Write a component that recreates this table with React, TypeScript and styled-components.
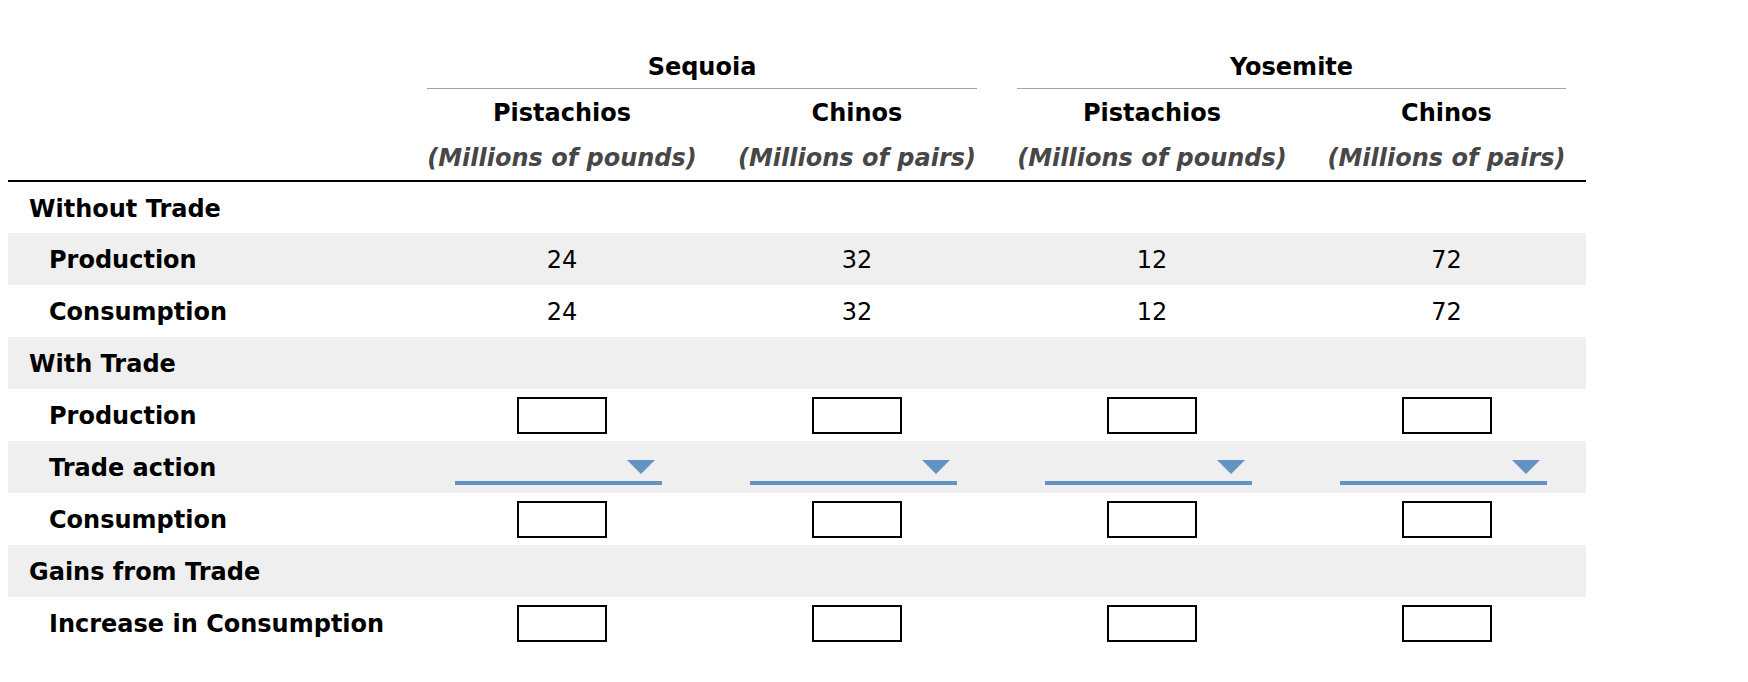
import styled, {createGlobalStyle} from 'styled-components';

const GlobalStyle = createGlobalStyle`
  body {
    margin: 8px;
    background: #ffffff;
    font-family: 'DejaVu Sans', Verdana, sans-serif;
    color: #000000;
  }
`;

const COLOR = {
  BLACK: '#000000',
  GRAY_TEXT: '#474747',
  GRAY_RULE: '#a4a4a4',
  BAND: '#efefef',
  BLUE: '#6392c3',
};

const Table = styled.table`
  margin-top: 39px;
  width: 1578px;
  table-layout: fixed;
  border-collapse: collapse;
  border-spacing: 0;
  font-size: 24px;
`;

const HeadCell = styled.th<{$h: number; $rule?: boolean}>`
  height: ${p => p.$h}px;
  padding: 0 20px;
  text-align: center;
  vertical-align: top;
  font-weight: 700;
  line-height: ${p => p.$h}px;
  white-space: nowrap;
  border-bottom: ${p => (p.$rule ? `2px solid ${COLOR.BLACK}` : 'none')};
`;

const GroupTitle = styled.div`
  height: 41px;
  line-height: 41px;
  border-bottom: 1px solid ${COLOR.GRAY_RULE};
`;

const Unit = styled.span`
  font-style: italic;
  color: ${COLOR.GRAY_TEXT};
`;

const Row = styled.tr<{$band: boolean}>`
  height: 52px;
  background: ${p => (p.$band ? COLOR.BAND : 'transparent')};
`;

const Label = styled.td<{$sub: boolean}>`
  padding: 2px 0 0 ${p => (p.$sub ? 41 : 21)}px;
  font-weight: 700;
  white-space: nowrap;
  vertical-align: middle;
`;

const Value = styled.td`
  padding: 2px 20px 0;
  text-align: center;
  vertical-align: middle;
`;

const InputBox = styled.div`
  box-sizing: border-box;
  width: 90px;
  height: 37px;
  margin: 0 auto 2px;
  border: 2px solid ${COLOR.BLACK};
  background: #ffffff;
`;

const Dropdown = styled.div`
  box-sizing: border-box;
  display: flex;
  align-items: center;
  justify-content: flex-end;
  width: 207px;
  height: 32px;
  margin: 2px calc(50% - 100px) 0 calc(50% - 107px);
  padding-right: 7px;
  border-bottom: 4px solid ${COLOR.BLUE};
`;

const Arrow = styled.span`
  width: 0;
  height: 0;
  border-left: 14px solid transparent;
  border-right: 14px solid transparent;
  border-top: 14px solid ${COLOR.BLUE};
`;

type Cell = string | 'input' | 'select' | null;

const rows: {label: string; sub: boolean; cells: Cell[]}[] = [
  {label: 'Without Trade', sub: false, cells: [null, null, null, null]},
  {label: 'Production', sub: true, cells: ['24', '32', '12', '72']},
  {label: 'Consumption', sub: true, cells: ['24', '32', '12', '72']},
  {label: 'With Trade', sub: false, cells: [null, null, null, null]},
  {label: 'Production', sub: true, cells: ['input', 'input', 'input', 'input']},
  {label: 'Trade action', sub: true, cells: ['select', 'select', 'select', 'select']},
  {label: 'Consumption', sub: true, cells: ['input', 'input', 'input', 'input']},
  {label: 'Gains from Trade', sub: false, cells: [null, null, null, null]},
  {label: 'Increase in Consumption', sub: true, cells: ['input', 'input', 'input', 'input']},
];

const products = [
  {name: 'Pistachios', unit: '(Millions of pounds)'},
  {name: 'Chinos', unit: '(Millions of pairs)'},
];

function renderCell(cell: Cell) {
  if (cell === 'input') return <InputBox />;
  if (cell === 'select') {
    return (
      <Dropdown>
        <Arrow />
      </Dropdown>
    );
  }
  return cell;
}

function App() {
  return (
    <>
      <GlobalStyle />
      <Table>
        <colgroup>
          <col style={{width: 399}} />
          <col style={{width: 310}} />
          <col style={{width: 280}} />
          <col style={{width: 310}} />
          <col style={{width: 279}} />
        </colgroup>
        <thead>
          <tr>
            <HeadCell $h={42} />
            <HeadCell $h={42} colSpan={2}>
              <GroupTitle>Sequoia</GroupTitle>
            </HeadCell>
            <HeadCell $h={42} colSpan={2}>
              <GroupTitle>Yosemite</GroupTitle>
            </HeadCell>
          </tr>
          <tr>
            <HeadCell $h={48} />
            {[...products, ...products].map((p, i) => (
              <HeadCell $h={48} key={i}>
                {p.name}
              </HeadCell>
            ))}
          </tr>
          <tr>
            <HeadCell $h={43} $rule />
            {[...products, ...products].map((p, i) => (
              <HeadCell $h={43} $rule key={i}>
                <Unit>{p.unit}</Unit>
              </HeadCell>
            ))}
          </tr>
        </thead>
        <tbody>
          {rows.map((r, i) => (
            <Row $band={i % 2 === 1} key={i}>
              <Label $sub={r.sub}>{r.label}</Label>
              {r.cells.map((c, j) => (
                <Value key={j}>{renderCell(c)}</Value>
              ))}
            </Row>
          ))}
        </tbody>
      </Table>
    </>
  );
}

export default App;
